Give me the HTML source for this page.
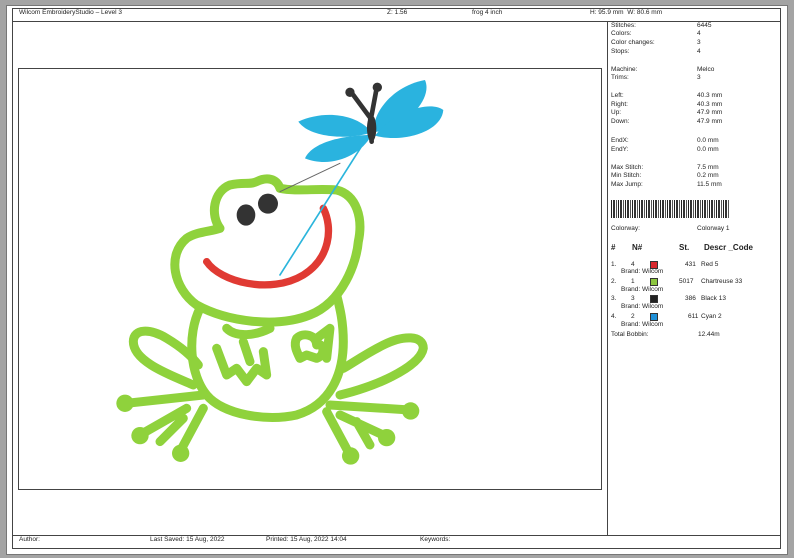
<!DOCTYPE html>
<html><head><meta charset="utf-8"><style>
html,body{margin:0;padding:0}
body{width:794px;height:558px;background:#a4a4a4;position:relative;overflow:hidden;font-family:"Liberation Sans",Arial,sans-serif;font-size:6.5px;color:#222}
.page{position:absolute;left:6px;top:5px;width:780px;height:548px;background:#fff;border:1px solid #777}
.frame{position:absolute;left:12px;top:8px;width:769px;height:541px;border:1px solid #444;box-sizing:border-box}
.t{position:absolute;white-space:nowrap;line-height:1}
.hl{position:absolute;background:#444}
.bc{position:absolute;left:611px;top:200px;width:118px;height:18px;background:repeating-linear-gradient(90deg,#222 0 1px,#fff 1px 2px,#333 2px 4px,#fff 4px 5px,#555 5px 6px,#fff 6px 7px)}
.sw{position:absolute;width:6px;height:6px;border:1px solid #333}
b.t{font-size:8px;font-weight:bold}
</style></head><body>
<div class="page"></div>
<div class="frame"></div>
<div class="hl" style="left:12px;top:21px;width:769px;height:1px"></div>
<div class="hl" style="left:12px;top:535px;width:769px;height:1px"></div>
<div class="hl" style="left:607px;top:21px;width:1px;height:514px"></div>
<div style="position:absolute;left:18px;top:68px;width:584px;height:422px;border:1px solid #444;box-sizing:border-box"></div>

<div class="t" style="left:19px;top:10px">Wilcom EmbroideryStudio – Level 3</div>
<div class="t" style="left:387px;top:10px">Z: 1.56</div>
<div class="t" style="left:472px;top:10px">frog 4 inch</div>
<div class="t" style="left:590px;top:10px">H: 95.9 mm &nbsp;W: 80.6 mm</div>

<div class="t" style="left:19px;top:537px">Author:</div>
<div class="t" style="left:150px;top:537px">Last Saved: 15 Aug, 2022</div>
<div class="t" style="left:266px;top:537px">Printed: 15 Aug, 2022 14:04</div>
<div class="t" style="left:420px;top:537px">Keywords:</div>

<div class="t" style="left:611px;top:23px">Stitches:</div><div class="t" style="left:697px;top:23px">6445</div>
<div class="t" style="left:611px;top:31px">Colors:</div><div class="t" style="left:697px;top:31px">4</div>
<div class="t" style="left:611px;top:40px">Color changes:</div><div class="t" style="left:697px;top:40px">3</div>
<div class="t" style="left:611px;top:49px">Stops:</div><div class="t" style="left:697px;top:49px">4</div>
<div class="t" style="left:611px;top:67px">Machine:</div><div class="t" style="left:697px;top:67px">Melco</div>
<div class="t" style="left:611px;top:75px">Trims:</div><div class="t" style="left:697px;top:75px">3</div>
<div class="t" style="left:611px;top:93px">Left:</div><div class="t" style="left:697px;top:93px">40.3 mm</div>
<div class="t" style="left:611px;top:102px">Right:</div><div class="t" style="left:697px;top:102px">40.3 mm</div>
<div class="t" style="left:611px;top:110px">Up:</div><div class="t" style="left:697px;top:110px">47.9 mm</div>
<div class="t" style="left:611px;top:119px">Down:</div><div class="t" style="left:697px;top:119px">47.9 mm</div>
<div class="t" style="left:611px;top:138px">EndX:</div><div class="t" style="left:697px;top:138px">0.0 mm</div>
<div class="t" style="left:611px;top:147px">EndY:</div><div class="t" style="left:697px;top:147px">0.0 mm</div>
<div class="t" style="left:611px;top:165px">Max Stitch:</div><div class="t" style="left:697px;top:165px">7.5 mm</div>
<div class="t" style="left:611px;top:173px">Min Stitch:</div><div class="t" style="left:697px;top:173px">0.2 mm</div>
<div class="t" style="left:611px;top:182px">Max Jump:</div><div class="t" style="left:697px;top:182px">11.5 mm</div>
<div class="bc"></div>
<div class="t" style="left:611px;top:226px">Colorway:</div><div class="t" style="left:697px;top:226px">Colorway 1</div>
<b class="t" style="left:611px;top:244px">#</b><b class="t" style="left:632px;top:244px">N#</b><b class="t" style="left:679px;top:244px">St.</b><b class="t" style="left:704px;top:244px">Descr _Code</b>

<div class="t" style="left:611px;top:262px">1.</div><div class="t" style="left:631px;top:262px">4</div><div class="sw" style="left:650px;top:261px;background:#d8262c"></div><div class="t" style="left:685px;top:262px">431</div><div class="t" style="left:701px;top:262px">Red 5</div>
<div class="t" style="left:621px;top:269px">Brand: Wilcom</div>
<div class="t" style="left:611px;top:279px">2.</div><div class="t" style="left:631px;top:279px">1</div><div class="sw" style="left:650px;top:278px;background:#8cc63f"></div><div class="t" style="left:679px;top:279px">5017</div><div class="t" style="left:701px;top:279px">Chartreuse 33</div>
<div class="t" style="left:621px;top:287px">Brand: Wilcom</div>
<div class="t" style="left:611px;top:296px">3.</div><div class="t" style="left:631px;top:296px">3</div><div class="sw" style="left:650px;top:295px;background:#222"></div><div class="t" style="left:685px;top:296px">386</div><div class="t" style="left:701px;top:296px">Black 13</div>
<div class="t" style="left:621px;top:304px">Brand: Wilcom</div>
<div class="t" style="left:611px;top:314px">4.</div><div class="t" style="left:631px;top:314px">2</div><div class="sw" style="left:650px;top:313px;background:#1e90d8"></div><div class="t" style="left:688px;top:314px">611</div><div class="t" style="left:701px;top:314px">Cyan 2</div>
<div class="t" style="left:621px;top:322px">Brand: Wilcom</div>
<div class="t" style="left:611px;top:332px">Total Bobbin:</div><div class="t" style="left:698px;top:332px">12.44m</div>

<svg style="position:absolute;left:0;top:0" width="794" height="558">
<g transform="translate(110,75) scale(0.3333)" fill="none" stroke-linecap="round" stroke-linejoin="round">
<g stroke="#8fd23c" stroke-width="27">
<path d="M330,460 C300,420 310,350 360,330 C400,320 420,330 440,320 C470,305 500,310 510,340 C560,350 620,340 680,345 C740,360 760,430 745,500 C740,560 700,680 600,720 C500,760 350,740 260,690 C190,640 170,540 230,490 C260,470 300,470 330,460 Z"/>
<path d="M270,700 C230,780 240,900 290,960 C340,1020 470,1040 560,1020 C660,990 700,900 700,800 C700,740 690,700 680,660"/>
<path d="M250,930 C180,900 70,860 70,800 C70,760 120,760 170,790 C220,820 250,850 265,870"/>
<path d="M690,960 C780,940 930,880 940,820 C940,780 880,780 820,810 C760,840 720,870 700,880"/>
<path d="M280,960 L50,985 M230,1000 L90,1080 M280,1000 L210,1130 M220,1030 L150,1100"/>
<path d="M660,990 L900,1005 M690,1020 L830,1085 M650,1010 L720,1140 M740,1040 L780,1110"/>
<path d="M350,760 C380,790 440,780 480,760 M320,820 L350,900 L380,880 L410,920 L440,880 L470,900 L460,830 M400,800 L420,860"/>
<path d="M560,790 C580,770 620,780 620,810 C640,800 650,840 620,850 L590,840 L570,850 C560,830 550,810 560,790 M620,790 L660,760 L650,850"/>
</g>
<g fill="#8fd23c"><circle cx="45" cy="985" r="26"/><circle cx="90" cy="1082" r="26"/><circle cx="212" cy="1135" r="26"/><circle cx="902" cy="1008" r="26"/><circle cx="830" cy="1088" r="26"/><circle cx="722" cy="1143" r="26"/></g>
<path d="M290,560 C330,620 480,660 580,600 C660,550 670,460 640,400" stroke="#e03a33" stroke-width="22"/>
<ellipse cx="408" cy="420" rx="28" ry="32" fill="#333"/><ellipse cx="474" cy="386" rx="30" ry="30" fill="#333"/>
<path d="M510,350 L690,265" stroke="#666" stroke-width="3"/>
<path d="M510,600 L770,190" stroke="#2bb5dc" stroke-width="5"/>
<g fill="#2ab3df">
<path d="M785,172 C740,115 640,105 565,140 C600,190 720,195 785,172 Z"/>
<path d="M785,180 C720,180 610,195 585,250 C660,280 750,245 785,180 Z"/>
<path d="M790,172 C790,100 860,30 945,15 C970,70 890,160 790,172 Z"/>
<path d="M795,182 C850,110 960,75 1000,105 C995,170 880,205 795,182 Z"/>
</g>
<path d="M785,200 L780,120 M778,125 L730,60 M785,120 L800,40" stroke="#333" stroke-width="14"/>
<g fill="#333"><circle cx="720" cy="52" r="14"/><circle cx="802" cy="37" r="14"/><ellipse cx="785" cy="160" rx="14" ry="40"/></g>
</g>
</svg>
</body></html>
